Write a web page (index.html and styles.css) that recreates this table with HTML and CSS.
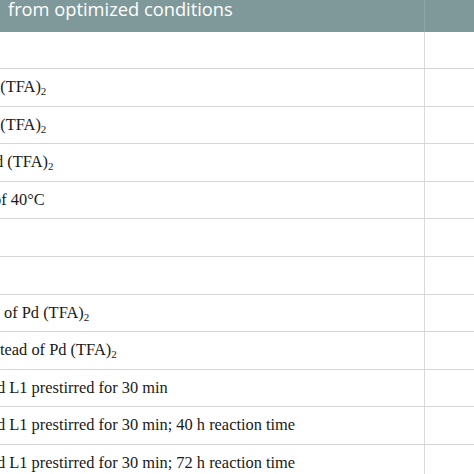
FILE: index.html
```html
<!DOCTYPE html>
<html lang="en">
<head>
<meta charset="utf-8">
<title>Deviation from optimized conditions</title>
<link rel="stylesheet" href="styles.css">
</head>
<body>
<div class="table">
  <div class="head">
    <div class="head-a">from optimized conditions</div>
    <div class="head-b"></div>
  </div>
  <div class="row"><div class="a"></div><div class="b"></div></div>
  <div class="row"><div class="a cut-a">d(TFA)<sub class="sub">2</sub></div><div class="b"></div></div>
  <div class="row"><div class="a cut-a">d(TFA)<sub class="sub">2</sub></div><div class="b"></div></div>
  <div class="row"><div class="a cut-b">d (TFA)<sub class="sub">2</sub></div><div class="b"></div></div>
  <div class="row"><div class="a cut-e">of 40°C</div><div class="b"></div></div>
  <div class="row"><div class="a"></div><div class="b"></div></div>
  <div class="row"><div class="a"></div><div class="b"></div></div>
  <div class="row"><div class="a cut-c">of Pd (TFA)<sub class="sub">2</sub></div><div class="b"></div></div>
  <div class="row"><div class="a">tead of Pd (TFA)<sub class="sub">2</sub></div><div class="b"></div></div>
  <div class="row"><div class="a cut-d">d L1 prestirred for 30 min</div><div class="b"></div></div>
  <div class="row"><div class="a cut-d">d L1 prestirred for 30 min; 40 h reaction time</div><div class="b"></div></div>
  <div class="row"><div class="a cut-d">d L1 prestirred for 30 min; 72 h reaction time</div><div class="b"></div></div>
</div>
</body>
</html>
```
FILE: styles.css
```css
html, body {
  margin: 0;
  padding: 0;
  background: #ffffff;
  overflow: hidden;
}
.table {
  width: 474px;
}
.head {
  display: grid;
  grid-template-columns: 424px 1fr;
  height: 31.5px;
  background: #7f999a;
}
.head-a {
  font-family: "Open Sans", sans-serif;
  font-size: 18.3px;
  line-height: 18px;
  color: #ffffff;
  padding-left: 8px;
  white-space: nowrap;
}
.head-b {
  border-left: 1px solid #8fa7a8;
}
.row {
  display: grid;
  grid-template-columns: 424px 1fr;
  height: 37.6px;
  box-sizing: border-box;
  border-bottom: 1.5px solid #d6d6d6;
}
.a {
  font-family: "Liberation Serif", "Times New Roman", serif;
  font-size: 16.4px;
  line-height: 36px;
  color: #1a1a1a;
  white-space: nowrap;
  overflow: hidden;
}
.b {
  border-left: 1.5px solid #dadada;
}
.sub {
  font-size: 11px;
  vertical-align: -3px;
  line-height: 0;
}
.cut-a { text-indent: -8px; }
.cut-b { text-indent: -5px; }
.cut-c { text-indent: 4px; }
.cut-d { text-indent: -3px; }
.cut-e { text-indent: -7px; }
```
